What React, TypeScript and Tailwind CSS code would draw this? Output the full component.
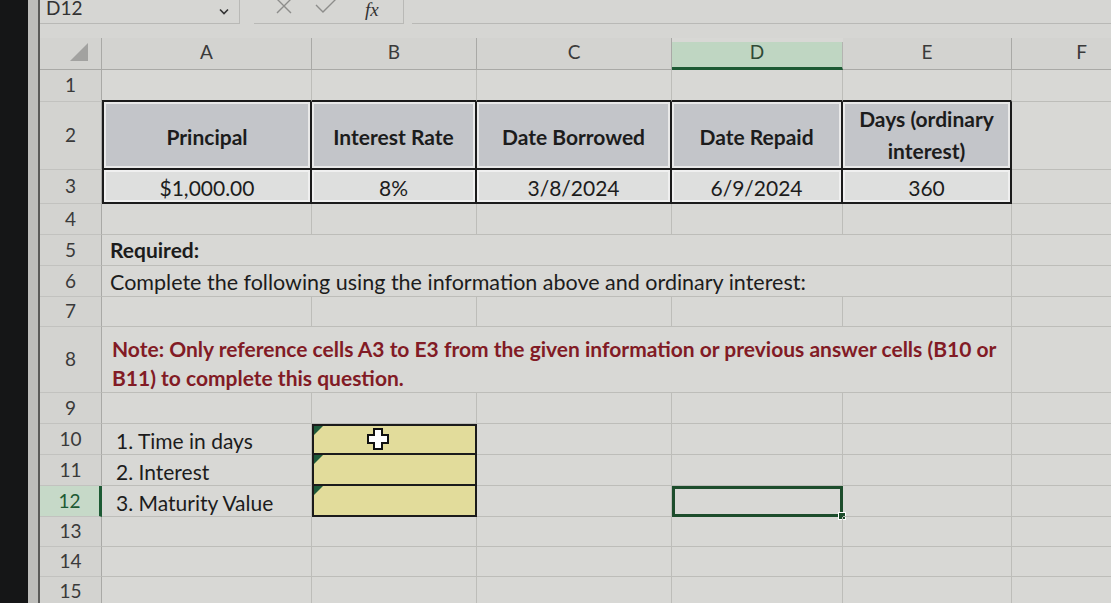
import React from 'react'

// Ancho de columnas: cabecera de filas, A..F
const cols = ['A', 'B', 'C', 'D', 'E', 'F']

const font = { fontFamily: 'Lato, "Noto Sans", "Liberation Sans", sans-serif' }

function Cell({
  className = '',
  children,
}: {
  className?: string
  children?: React.ReactNode
}) {
  return (
    <div className={`relative border-r border-b border-[#bdbdb9] ${className}`}>
      {children}
    </div>
  )
}

function ErrorMark() {
  return (
    <svg className="absolute left-0 top-0" width="9" height="9" viewBox="0 0 9 9">
      <polygon points="0,0 9,0 0,9" fill="#1f5a3a" />
    </svg>
  )
}

function RowHeader({ n }: { n: number }) {
  const active = n === 12
  return (
    <div
      className={`flex items-center justify-center border-b border-[#c2c2bf] text-[19px] ${
        active
          ? 'bg-[#c6d9c8] text-[#1d5a34] border-r-[3px] border-r-[#1d5a34]'
          : 'bg-[#d3d3d0] text-[#3a3a3a] border-r border-r-[#a9a9a6]'
      }`}
    >
      {n}
    </div>
  )
}

export default function App() {
  return (
    <div
      className="flex h-[603px] w-[1111px] overflow-hidden bg-[#d8d8d5] text-[#1c1c1c]"
      style={font}
    >
      {/* borde oscuro del monitor */}
      <div className="w-[28px] shrink-0 bg-[#151617]" />
      <div className="w-[12px] shrink-0 border-r-2 border-[#5a5a58] bg-[#bdbdba]" />

      <div className="flex min-w-0 flex-1 flex-col">
        {/* barra de fórmulas */}
        <div className="flex h-[24px] shrink-0 items-stretch bg-[#d6d6d3]">
          <div className="flex w-[200px] items-start justify-between border-b border-r border-[#b9b9b6] pl-[6px] pr-[10px]">
            <span className="-mt-[4px] text-[19px] leading-[24px] text-[#333]">D12</span>
            <svg width="10" height="8" viewBox="0 0 10 8" className="mt-[8px]">
              <path d="M1 1.5 L5 5.5 L9 1.5" stroke="#333" strokeWidth="1.6" fill="none" />
            </svg>
          </div>
          <div className="w-[14px]" />
          <div className="flex w-[150px] items-start border-b border-r border-[#b9b9b6] pl-[21px]">
            <svg width="18" height="16" viewBox="0 0 18 16" className="-mt-[2px]">
              <path d="M2 1 L16 15 M16 1 L2 15" stroke="#8d8d8b" strokeWidth="1.4" />
            </svg>
            <svg width="22" height="16" viewBox="0 0 22 16" className="-mt-[2px] ml-[22px]">
              <path d="M1 7 L8 14 L21 1" stroke="#8d8d8b" strokeWidth="1.4" fill="none" />
            </svg>
            <span
              className="-mt-[4px] ml-[28px] text-[19px] italic text-[#333]"
              style={{ fontFamily: '"Liberation Serif", "DejaVu Serif", serif' }}
            >
              fx
            </span>
          </div>
          <div className="ml-[8px] flex-1 border-b border-[#b9b9b6]" />
        </div>
        <div className="h-[14px] shrink-0 bg-[#d6d6d3]" />

        {/* hoja */}
        <div className="grid grid-cols-[62px_210px_165px_195px_171px_169px_140px] grid-rows-[32px_32px_68px_34px_31px_31px_31px_30px_66px_31px_31px_31px_31px_30px_30px_30px]">
          {/* cabeceras de columna */}
          <div className="relative border-b border-r border-[#a9a9a6] bg-[#d3d3d0]">
            <svg className="absolute bottom-[8px] right-[13px]" width="18" height="18" viewBox="0 0 18 18">
              <polygon points="18,0 18,18 0,18" fill="#a2a2a0" />
            </svg>
          </div>
          {cols.map((c) =>
            c === 'D' ? (
              <div
                key={c}
                className="mt-[4px] flex items-end justify-center border-b-[3px] border-r border-b-[#1d5a34] border-r-[#b4b4b1] bg-[#bfd6c2] pb-[1px] text-[19px] text-[#2f4a36]"
              >
                {c}
              </div>
            ) : (
              <div
                key={c}
                className="flex items-end justify-center border-b border-r border-[#a9a9a6] bg-[#d3d3d0] pb-[3px] text-[19px] text-[#3a3a3a]"
              >
                {c}
              </div>
            ),
          )}

          {/* fila 1 */}
          <RowHeader n={1} />
          {cols.map((c) => (
            <Cell key={c} className={c !== 'F' ? 'border-b-2 border-b-[#1b1b1b]' : ''} />
          ))}

          {/* fila 2: cabecera de la tabla */}
          <RowHeader n={2} />
          {['Principal', 'Interest Rate', 'Date Borrowed', 'Date Repaid'].map((t, i) => (
            <div
              key={t}
              className={`flex items-center justify-center border-b-2 border-r-2 border-[#1b1b1b] bg-[#c3c5c9] pt-[4px] text-[21px] font-bold shadow-[inset_0_0_0_2px_#e9e9e9] ${
                i === 0 ? 'border-l-2' : ''
              }`}
            >
              {t}
            </div>
          ))}
          <div className="flex items-center justify-center border-b-2 border-r-2 border-[#1b1b1b] bg-[#c3c5c9] text-center text-[21px] font-bold leading-[32px] shadow-[inset_0_0_0_2px_#e9e9e9]">
            Days (ordinary
            <br />
            interest)
          </div>
          <Cell />

          {/* fila 3: datos */}
          <RowHeader n={3} />
          {['$1,000.00', '8%', '3/8/2024', '6/9/2024', '360'].map((t, i) => (
            <div
              key={t}
              className={`flex items-center justify-center border-b-2 border-r-2 border-[#1b1b1b] bg-[#dedfde] pt-[4px] text-[21px] shadow-[inset_0_0_0_2px_#f0f0f0] ${
                i === 0 ? 'border-l-2' : ''
              }`}
            >
              {t}
            </div>
          ))}
          <Cell />

          {/* fila 4 */}
          <RowHeader n={4} />
          {cols.map((c) => (
            <Cell key={c} />
          ))}

          {/* fila 5 */}
          <RowHeader n={5} />
          <Cell className="col-span-5 flex items-center pl-[8px] text-[21px] font-bold">Required:</Cell>
          <Cell />

          {/* fila 6 */}
          <RowHeader n={6} />
          <Cell className="col-span-5 flex items-center pl-[8px] pt-[3px] text-[21.5px]">
            Complete the following using the information above and ordinary interest:
          </Cell>
          <Cell />

          {/* fila 7 */}
          <RowHeader n={7} />
          {cols.map((c) => (
            <Cell key={c} />
          ))}

          {/* fila 8: nota */}
          <RowHeader n={8} />
          <Cell className="col-span-5 flex items-center pl-[10px] pt-[6px] text-[21px] font-bold leading-[29px] text-[#821b25]">
            <span>
              Note: Only reference cells A3 to E3 from the given information or previous answer cells (B10 or
              <br />
              B11) to complete this question.
            </span>
          </Cell>
          <Cell />

          {/* fila 9 */}
          <RowHeader n={9} />
          {cols.map((c) => (
            <Cell key={c} />
          ))}

          {/* filas 10-12: respuestas */}
          {[
            [10, '1. Time in days'],
            [11, '2. Interest'],
            [12, '3. Maturity Value'],
          ].map(([n, label]) => (
            <React.Fragment key={n}>
              <RowHeader n={n as number} />
              <Cell className="flex items-center pl-[14px] pt-[3px] text-[21px]">{label}</Cell>
              <div
                className={`relative border-b-2 border-l-2 border-r-2 border-[#1b1b1b] bg-[#e2dc9b] ${
                  n === 10 ? 'border-t-2' : ''
                }`}
              >
                <ErrorMark />
                {n === 10 && (
                  <svg className="absolute left-[52px] top-[1px]" width="24" height="24" viewBox="0 0 24 24">
                    <path
                      d="M8 2 H16 V8 H22 V16 H16 V22 H8 V16 H2 V8 H8 Z"
                      fill="#ffffff"
                      stroke="#111"
                      strokeWidth="2"
                    />
                  </svg>
                )}
              </div>
              <Cell />
              {n === 12 ? (
                <div className="relative border-[3px] border-[#1d4d2c]">
                  <div className="absolute -bottom-[6px] -right-[6px] h-[8px] w-[8px] border border-white bg-[#1d4d2c]" />
                </div>
              ) : (
                <Cell />
              )}
              <Cell />
              <Cell />
            </React.Fragment>
          ))}

          {/* filas 13-15 */}
          {[13, 14, 15].map((n) => (
            <React.Fragment key={n}>
              <RowHeader n={n} />
              {cols.map((c) => (
                <Cell key={c} />
              ))}
            </React.Fragment>
          ))}
        </div>
      </div>
    </div>
  )
}
